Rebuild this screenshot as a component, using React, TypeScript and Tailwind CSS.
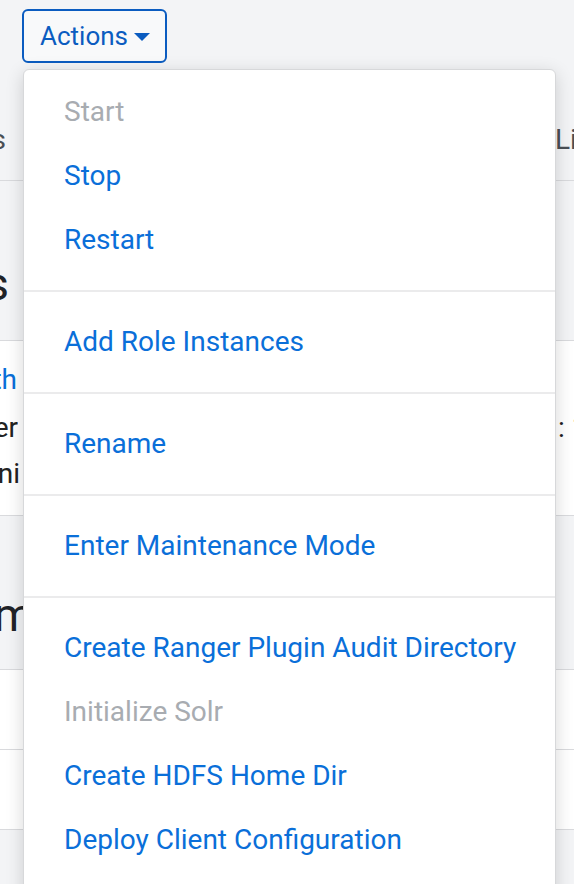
import React from 'react';

type Item = { label: string; disabled?: boolean };

const groups: Item[][] = [
  [{ label: 'Start', disabled: true }, { label: 'Stop' }, { label: 'Restart' }],
  [{ label: 'Add Role Instances' }],
  [{ label: 'Rename' }],
  [{ label: 'Enter Maintenance Mode' }],
  [
    { label: 'Create Ranger Plugin Audit Directory' },
    { label: 'Initialize Solr', disabled: true },
    { label: 'Create HDFS Home Dir' },
    { label: 'Deploy Client Configuration' },
  ],
];

// clipped text that only shows its tail at the left edge
function LeftEdge({ text, width, className }: { text: string; width: string; className: string }) {
  return (
    <div className={`${width} overflow-hidden flex justify-end`}>
      <span className={`whitespace-nowrap ${className}`}>{text}</span>
    </div>
  );
}

function RightEdge({ text, width, className }: { text: string; width: string; className: string }) {
  return (
    <div className={`${width} overflow-hidden flex justify-start`}>
      <span className={`whitespace-nowrap ${className}`}>{text}</span>
    </div>
  );
}

function ActionsMenu() {
  return (
    <div className="absolute left-[23px] top-[69px] w-[533px] h-[860px] bg-white border border-[#d7d8da] rounded-md shadow-[0_4px_18px_rgba(0,0,0,0.16)] pt-[10px]">
      {groups.map((group, gi) => (
        <div key={gi}>
          {gi > 0 && <div className="my-[18px] h-[2px] bg-[#ebebec]" />}
          {group.map((item) => (
            <div
              key={item.label}
              className={`h-[64px] flex items-center pl-[40px] text-[28px] ${
                item.disabled ? 'text-[#a8acb1]' : 'text-[#0a6fd9]'
              }`}
            >
              {item.label}
            </div>
          ))}
        </div>
      ))}
    </div>
  );
}

export default function App() {
  return (
    <div
      className="relative w-full h-[884px] overflow-hidden bg-[#f3f4f6]"
      style={{ fontFamily: 'Roboto, "Noto Sans", sans-serif' }}
    >
      <div className="h-[181px] border-b border-[#d9dadd] flex flex-col">
        <div className="pt-[9px] pl-[22px]">
          <button className="h-[54px] w-[145px] flex items-center pl-[16px] gap-[6px] border-2 border-[#0b5cc0] rounded-md bg-[#f8f9fa] text-[#0b5cc0] text-[26px]">
            <span>Actions</span>
            <svg width="16" height="9" viewBox="0 0 16 9" className="mt-[2px]">
              <path d="M0 0 L16 0 L8 8 Z" fill="#0b5cc0" />
            </svg>
          </button>
        </div>
        <div className="mt-auto h-[81px] flex items-center justify-between">
          <LeftEdge text="Roles" width="w-[6px]" className="text-[28px] text-[#4a4f55]" />
          <RightEdge text="Links" width="w-[19px]" className="text-[28px] text-[#4a4f55]" />
        </div>
      </div>

      <div className="h-[160px] border-b border-[#d9dadd] pt-[80px]">
        <LeftEdge text="Roles" width="w-[9px]" className="text-[46px] leading-[46px] text-[#1f2328]" />
      </div>

      <div className="h-[175px] border-b border-[#d9dadd] bg-white pt-[23px] flex flex-col">
        <div className="h-[32px] flex items-center">
          <LeftEdge text="Health" width="w-[17px]" className="text-[28px] text-[#0a6fd9]" />
        </div>
        <div className="mt-[16px] h-[32px] flex items-center justify-between">
          <LeftEdge text="Server" width="w-[18px]" className="text-[28px] text-[#222]" />
          <RightEdge text=": 1" width="w-[18px]" className="text-[28px] text-[#222] pl-[2px]" />
        </div>
        <div className="mt-[14px] h-[32px] flex items-center">
          <LeftEdge text="Concerni" width="w-[20px]" className="text-[28px] text-[#222]" />
        </div>
      </div>

      <div className="h-[154px] border-b border-[#d9dadd] pt-[76px]">
        <LeftEdge text="Alarm" width="w-[34px]" className="text-[46px] leading-[46px] text-[#1f2328]" />
      </div>

      <div className="h-[80px] border-b border-[#d9dadd] bg-white" />
      <div className="h-[80px] border-b border-[#d9dadd] bg-white" />

      <ActionsMenu />
    </div>
  );
}
